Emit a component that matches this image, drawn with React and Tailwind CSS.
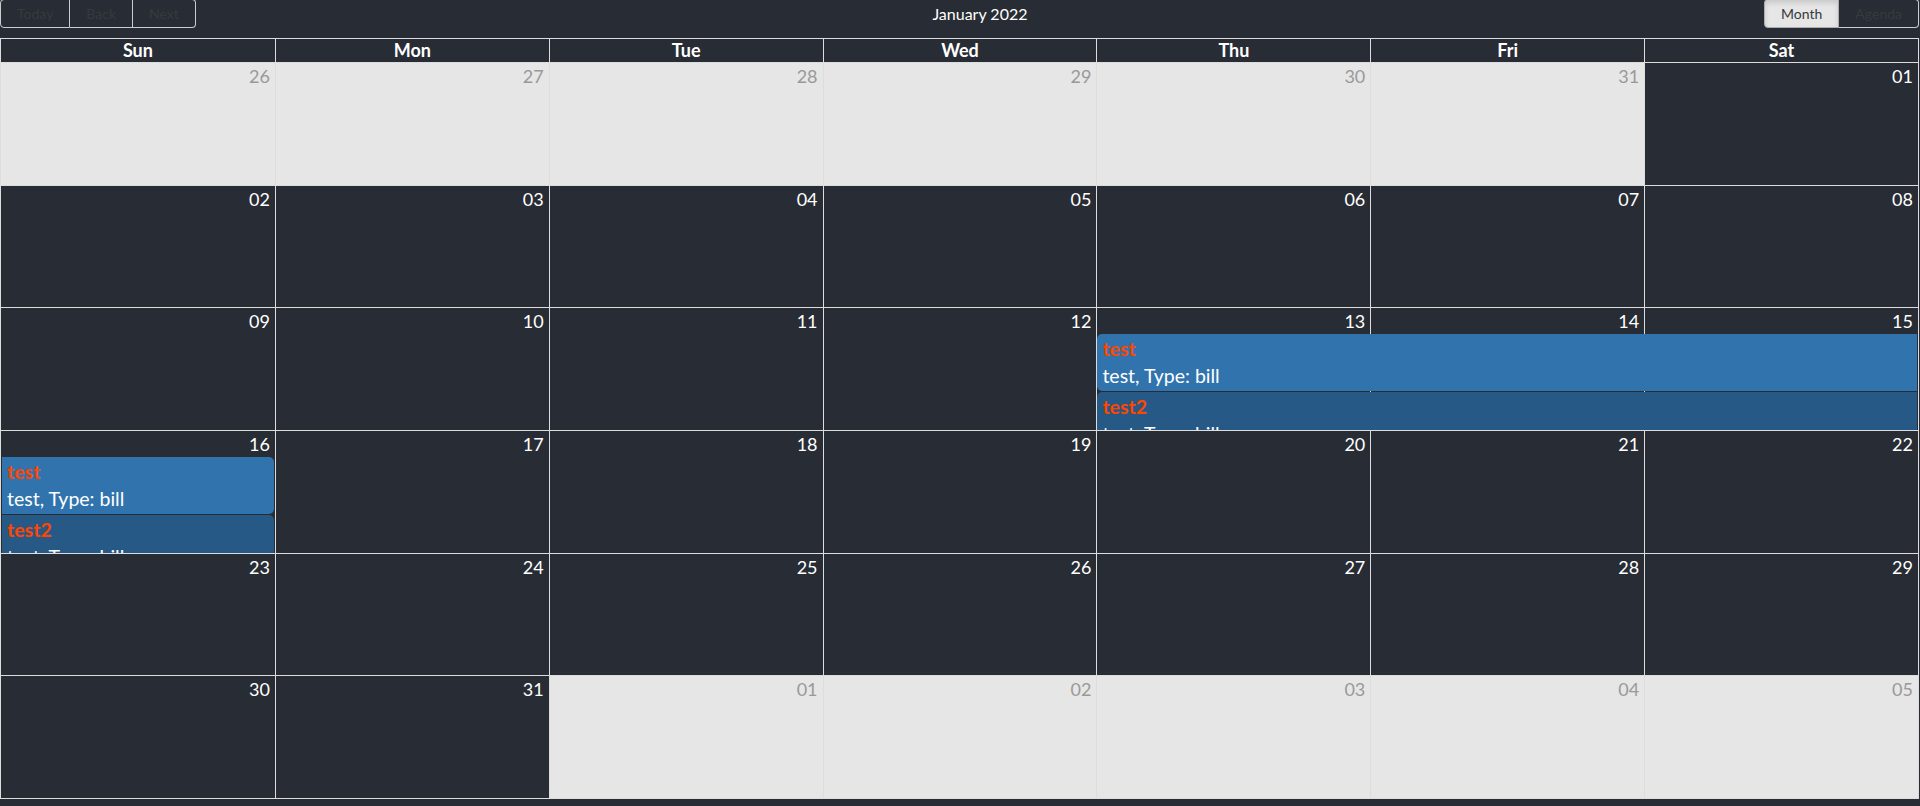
import React from "react"

const dayNames = ["Sun", "Mon", "Tue", "Wed", "Thu", "Fri", "Sat"]

const buildWeeks = () => {
  const start = new Date(2021, 11, 26)
  const weeks = []
  for (let w = 0; w < 6; w++) {
    const week = []
    for (let d = 0; d < 7; d++) {
      const date = new Date(start)
      date.setDate(start.getDate() + w * 7 + d)
      week.push({ label: String(date.getDate()).padStart(2, "0"), off: date.getMonth() !== 0 })
    }
    weeks.push(week)
  }
  return weeks
}

// events per week row
const weekEvents = {
  2: { span: "col-start-5 col-span-3", shape: "rounded-l-[5px]" },
  3: { span: "col-start-1 col-span-1", shape: "rounded-r-[5px]" },
}

const EventBox = ({ title, selected, shape }) => (
  <div
    className={`${selected ? "bg-[#265985]" : "bg-[#3174ad]"} ${shape} px-[5px] py-[2px] text-[19.5px] leading-[26.5px] text-white cursor-pointer`}
  >
    <div className="font-bold text-[#ff4500]">{title}</div>
    <div className="whitespace-nowrap">test, Type: bill</div>
  </div>
)

const WeekRow = ({ week, index }) => {
  const ev = weekEvents[index]
  return (
    <div
      className={`flex-1 basis-0 min-h-0 overflow-hidden grid grid-cols-7 grid-rows-[auto_auto_auto_1fr] ${
        index > 0 ? "border-t border-[#dddddd]" : ""
      }`}
    >
      {week.map((day, i) => (
        <div
          key={"bg" + i}
          className={`row-start-1 row-end-5 ${i > 0 ? "border-l border-[#dddddd]" : ""} ${
            day.off ? "bg-[#e6e6e6]" : ""
          }`}
          style={{ gridColumnStart: i + 1 }}
        />
      ))}
      {week.map((day, i) => (
        <div
          key={"d" + i}
          className={`row-start-1 pt-px pr-[5px] text-right text-[18px] leading-[25px] ${
            day.off ? "text-[#999999]" : "text-white"
          }`}
          style={{ gridColumnStart: i + 1 }}
        >
          {day.label}
        </div>
      ))}
      {ev && (
        <>
          <div className={`row-start-2 ${ev.span} px-px pb-px`}>
            <EventBox title="test" shape={ev.shape} />
          </div>
          <div className={`row-start-3 ${ev.span} px-px pb-px`}>
            <EventBox title="test2" selected shape={ev.shape} />
          </div>
        </>
      )}
    </div>
  )
}

const App = () => {
  const weeks = buildWeeks()

  return (
    <div className="h-[806px] w-full overflow-hidden bg-[#282c34] pr-px font-['Lato',sans-serif]">
      <div className="-mt-px mb-[10px] flex h-[29px] items-center">
        <div className="flex h-full text-[14px] text-[#373a3c]">
          <button className="h-full rounded-l-[4px] border border-[#cccccc] px-4">Today</button>
          <button className="h-full border-y border-r border-[#cccccc] px-4">Back</button>
          <button className="h-full rounded-r-[4px] border-y border-r border-[#cccccc] px-4">Next</button>
        </div>
        <span className="flex-1 text-center text-[16px] text-white">January 2022</span>
        <div className="flex h-full text-[14px] text-[#373a3c]">
          <button className="h-full rounded-l-[4px] border border-[#adadad] bg-[#e6e6e6] px-4 shadow-[inset_0_3px_5px_rgba(0,0,0,0.125)]">
            Month
          </button>
          <button className="h-full rounded-r-[4px] border-y border-r border-[#cccccc] px-4">Agenda</button>
        </div>
      </div>

      <div className="flex h-[761px] flex-col border border-[#dddddd]">
        <div className="grid grid-cols-7 border-b border-[#dddddd]">
          {dayNames.map((name, i) => (
            <div
              key={name}
              className={`px-[3px] text-center text-[18px] font-bold leading-[23px] text-white ${
                i > 0 ? "border-l border-[#dddddd]" : ""
              }`}
            >
              {name}
            </div>
          ))}
        </div>
        {weeks.map((week, i) => (
          <WeekRow key={i} week={week} index={i} />
        ))}
      </div>
    </div>
  )
}

export default App
